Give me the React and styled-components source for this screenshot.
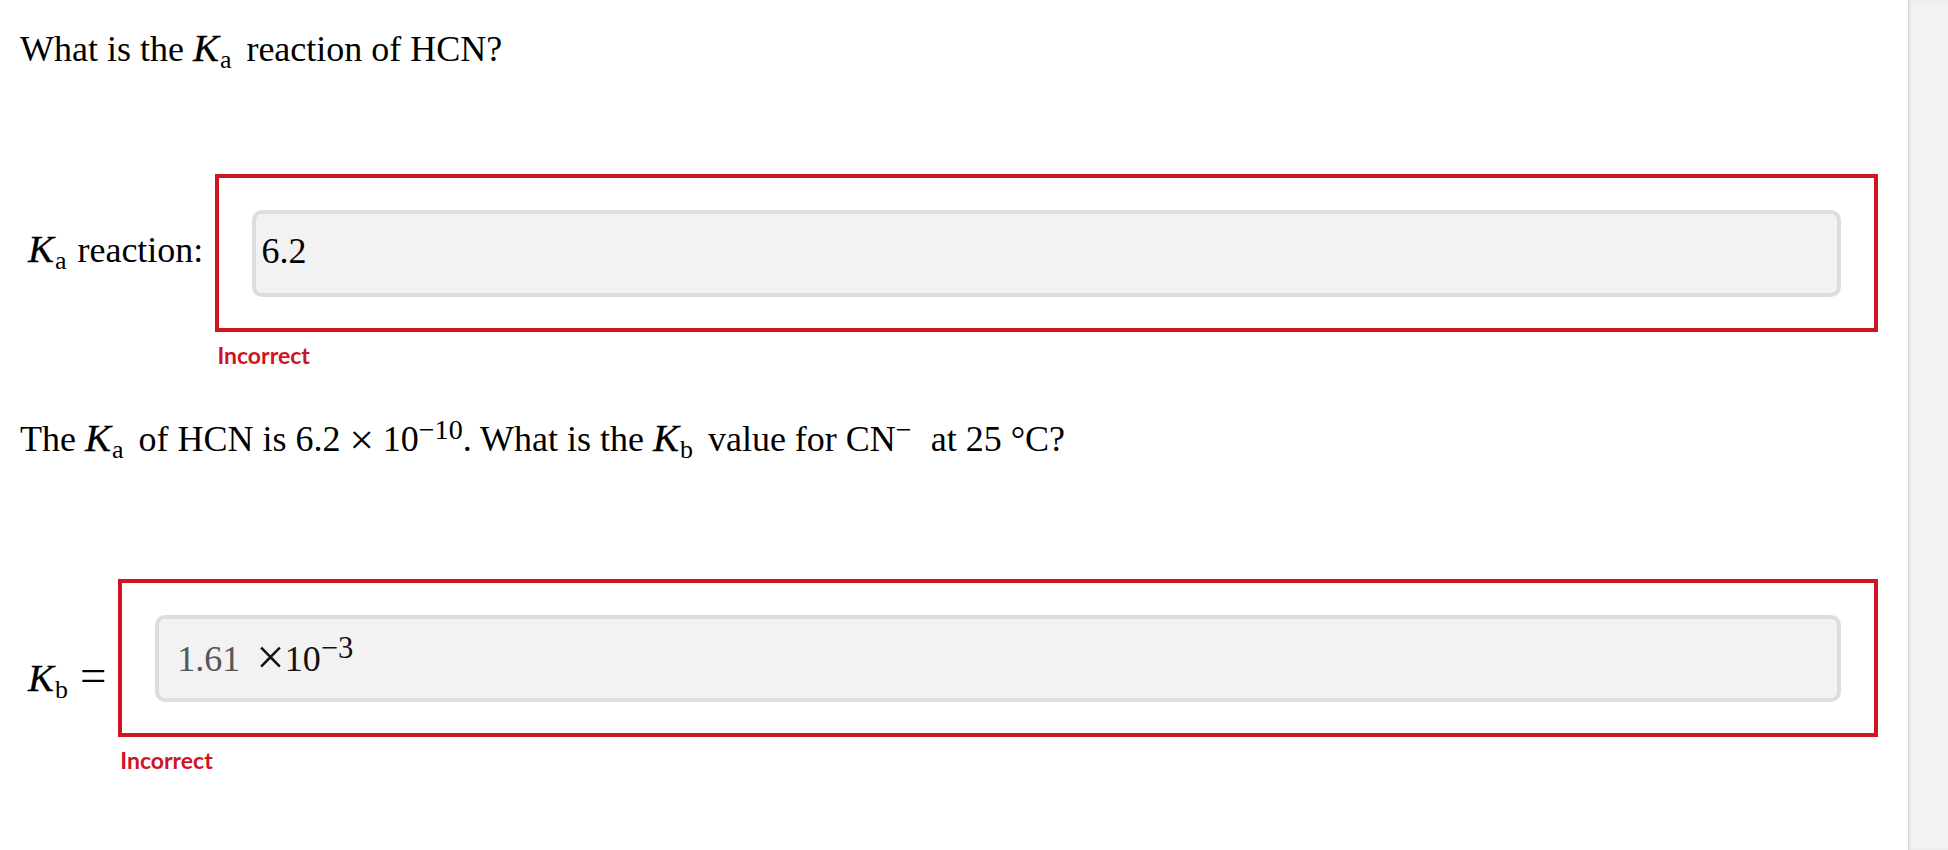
import styled, { createGlobalStyle } from 'styled-components';

// answer review page: two questions, both marked wrong

const GlobalStyle = createGlobalStyle`
  *, *::before, *::after {
    box-sizing: border-box;
  }
  html, body {
    margin: 0;
    padding: 0;
    background: #ffffff;
  }
`;

const Page = styled.div`
  display: flex;
  height: 100vh;
  font-family: 'Liberation Serif', 'Times New Roman', serif;
  color: #000;
`;

const Main = styled.main`
  flex: 1;
  padding: 28px 30px 0 20px;
`;

const Sidebar = styled.aside`
  width: 40px;
  flex-shrink: 0;
  background: #f2f2f2;
  border-left: 1px solid #d9d9d9;
  box-shadow: inset 2px 0 3px rgba(0, 0, 0, 0.05);
`;

const Question = styled.p`
  margin: 0 0 ${(p) => p.$gap}px;
  font-size: 36px;
  line-height: 43px;
`;

const Var = styled.i`
  font-style: italic;
  font-size: 1.08em;
  line-height: 0;
  -webkit-text-stroke: 0.3px #000;
`;

const Sub = styled.sub`
  font-size: 0.72em;
  vertical-align: -0.26em;
  line-height: 0;
  margin-left: 1px;
  margin-right: ${(p) => p.$space || 0}px;
`;

const Sup = styled.sup`
  font-size: ${(p) => p.$scale || 0.78}em;
  vertical-align: 0.44em;
  line-height: 0;
  margin-right: ${(p) => p.$space || 0}px;
`;

const Times = styled.span`
  font-size: ${(p) => p.$scale || 1.2}em;
  line-height: 0;
  vertical-align: -0.06em;
  margin: 0 ${(p) => p.$space || 0}px;
`;

const Row = styled.div`
  display: flex;
  gap: 12px;
  padding-left: 8px;
  margin-bottom: ${(p) => p.$gap || 0}px;
`;

const Label = styled.div`
  margin-top: ${(p) => p.$top}px;
  font-size: 36px;
  line-height: 43px;
  white-space: nowrap;
`;

const Eq = styled.span`
  display: inline-block;
  margin-left: 12px;
  font-size: 1.3em;
  line-height: 0;
`;

const AnswerColumn = styled.div`
  flex: 1;
  display: flex;
  flex-direction: column;
`;

const AnswerBox = styled.div`
  border: 4px solid #cf1424;
  padding: 32px 33px 31px;
`;

const Field = styled.div`
  height: 87px;
  border: 4px solid #dddddd;
  border-radius: 10px;
  background: #f2f2f2;
  padding: ${(p) => p.$padTop}px 6px 0 ${(p) => p.$padLeft}px;
  font-size: ${(p) => p.$size}px;
  line-height: 1.2;
  white-space: nowrap;
`;

const Entered = styled.span`
  color: #555555;
`;

const Unit = styled.span`
  margin-left: 16px;
  color: #111;
`;

const Feedback = styled.div`
  margin-top: 9px;
  margin-left: 2px;
  font-family: Lato, 'Open Sans', sans-serif;
  font-weight: 700;
  font-size: 23px;
  line-height: 29px;
  color: #cf1424;
`;

const App = () => {
  return (
    <Page>
      <GlobalStyle />
      <Main>
        <Question $gap={103}>
          What is the <Var>K</Var>
          <Sub $space={6}>a</Sub> reaction of HCN?
        </Question>

        <Row $gap={48}>
          <Label $top={55}>
            <Var>K</Var>
            <Sub $space={2}>a</Sub> reaction:
          </Label>
          <AnswerColumn>
            <AnswerBox>
              <Field $size={36} $padTop={16} $padLeft={5}>
                6.2
              </Field>
            </AnswerBox>
            <Feedback>Incorrect</Feedback>
          </AnswerColumn>
        </Row>

        <Question $gap={118}>
          The <Var>K</Var>
          <Sub $space={6}>a</Sub> of HCN is 6.2 <Times>×</Times> 10
          <Sup>−10</Sup>. What is the <Var>K</Var>
          <Sub $space={6}>b</Sub> value for CN<Sup $space={10}>−</Sup> at 25 °C?
        </Question>

        <Row>
          <Label $top={79}>
            <Var>K</Var>
            <Sub>b</Sub>
            <Eq>=</Eq>
          </Label>
          <AnswerColumn>
            <AnswerBox>
              <Field $size={36} $padTop={19} $padLeft={18}>
                <Entered>1.61</Entered>
                <Unit>
                  <Times $scale={1.4}>×</Times>10<Sup $scale={0.85}>−3</Sup>
                </Unit>
              </Field>
            </AnswerBox>
            <Feedback>Incorrect</Feedback>
          </AnswerColumn>
        </Row>
      </Main>
      <Sidebar />
    </Page>
  );
};

export default App;
